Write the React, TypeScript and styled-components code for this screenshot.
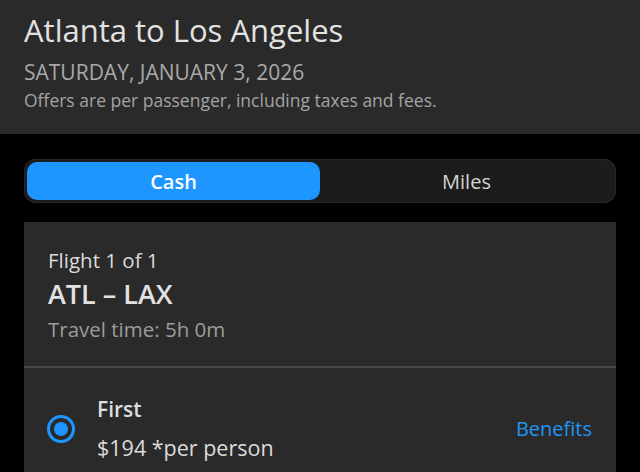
import styled, { createGlobalStyle } from "styled-components";

const GlobalStyle = createGlobalStyle`
  html, body {
    margin: 0;
    padding: 0;
    background: #000;
  }
  body {
    font-family: "Open Sans", "Liberation Sans", sans-serif;
    -webkit-font-smoothing: antialiased;
  }
`;

const Header = styled.header`
  background: #2a2a2a;
  height: 134px;
  box-sizing: border-box;
  padding: 10px 24px 0;
`;

const Title = styled.h1`
  margin: 0;
  font-size: 31px;
  font-weight: 400;
  line-height: 40px;
  color: #e2e2e2;
`;

const DateLine = styled.div`
  margin-top: 9px;
  font-size: 21px;
  line-height: 26px;
  color: #a9a9a9;
`;

const Note = styled.div`
  margin-top: 4px;
  font-size: 17.5px;
  line-height: 22px;
  color: #a3a3a3;
`;

const Body = styled.main`
  padding: 25px 24px 0;
`;

const Toggle = styled.div`
  display: flex;
  height: 44px;
  box-sizing: border-box;
  padding: 3px;
  border-radius: 12px;
  background: #1c1c1c;
  box-shadow: inset 0 0 0 1px #262626;
`;

const ToggleOption = styled.button<{ $active?: boolean }>`
  flex: 1;
  border: 0;
  border-radius: 10px;
  font-family: inherit;
  font-size: 20px;
  font-weight: ${(p) => (p.$active ? 600 : 400)};
  color: ${(p) => (p.$active ? "#ffffff" : "#d4d4d4")};
  background: ${(p) => (p.$active ? "#1e96ff" : "transparent")};
  cursor: pointer;
`;

const Card = styled.section`
  margin-top: 19px;
  background: #2a2a2a;
`;

const Summary = styled.div`
  padding: 24px 24px 23px;
  border-bottom: 2px solid #45464b;
`;

const FlightCount = styled.div`
  font-size: 20.5px;
  line-height: 28px;
  color: #dcdcdc;
`;

const Route = styled.div`
  margin-top: 3px;
  font-size: 27px;
  font-weight: 600;
  line-height: 34px;
  color: #e2e2e2;
`;

const TravelTime = styled.div`
  margin-top: 4px;
  font-size: 20.5px;
  line-height: 28px;
  color: #9c9c9c;
`;

const FareRow = styled.label`
  display: flex;
  align-items: center;
  padding: 27px 24px 30px 23px;
  gap: 22px;
`;

const Radio = styled.span`
  width: 28px;
  height: 28px;
  box-sizing: border-box;
  border-radius: 50%;
  border: 3px solid #1e96ff;
  display: flex;
  align-items: center;
  justify-content: center;
  flex-shrink: 0;

  &::after {
    content: "";
    width: 14px;
    height: 14px;
    border-radius: 50%;
    background: #1e96ff;
  }
`;

const FareText = styled.div`
  flex: 1;
`;

const FareName = styled.div`
  font-size: 21px;
  font-weight: 600;
  line-height: 28px;
  color: #dedede;
`;

const FarePrice = styled.div`
  margin-top: 11px;
  font-size: 21.5px;
  line-height: 28px;
  color: #dcdcdc;
`;

const BenefitsLink = styled.a`
  font-size: 20px;
  color: #2196f3;
  text-decoration: none;
`;

export default function App() {
  return (
    <>
      <GlobalStyle />
      <Header>
        <Title>Atlanta to Los Angeles</Title>
        <DateLine>SATURDAY, JANUARY 3, 2026</DateLine>
        <Note>Offers are per passenger, including taxes and fees.</Note>
      </Header>
      <Body>
        <Toggle>
          <ToggleOption $active>Cash</ToggleOption>
          <ToggleOption>Miles</ToggleOption>
        </Toggle>
        <Card>
          <Summary>
            <FlightCount>Flight 1 of 1</FlightCount>
            <Route>ATL – LAX</Route>
            <TravelTime>Travel time: 5h 0m</TravelTime>
          </Summary>
          <FareRow>
            <Radio />
            <FareText>
              <FareName>First</FareName>
              <FarePrice>$194 *per person</FarePrice>
            </FareText>
            <BenefitsLink href="#">Benefits</BenefitsLink>
          </FareRow>
        </Card>
      </Body>
    </>
  );
}
